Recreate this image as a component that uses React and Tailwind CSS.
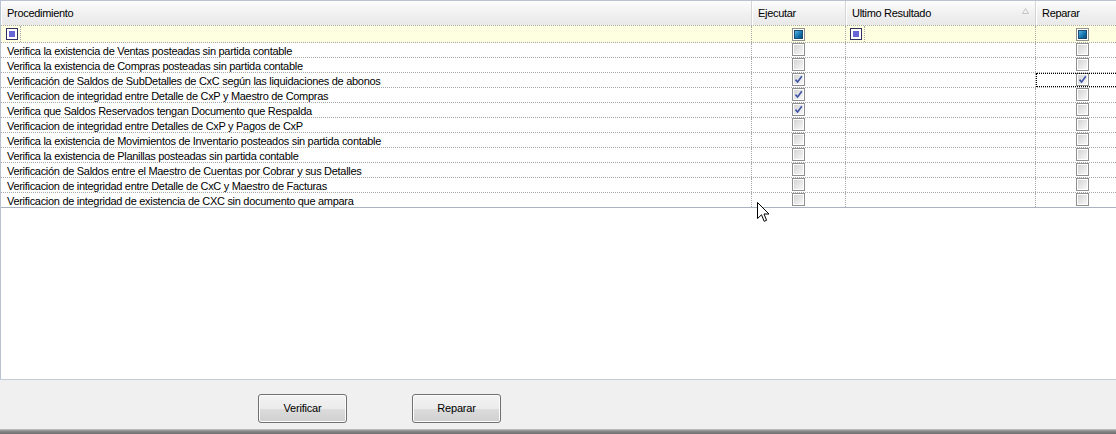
import React from 'react'

const rows = [
  { name: 'Verifica la existencia de Ventas posteadas sin partida contable', run: false, fix: false },
  { name: 'Verifica la existencia de Compras posteadas sin partida contable', run: false, fix: false },
  { name: 'Verificación de Saldos de SubDetalles de CxC según las liquidaciones de abonos', run: true, fix: true, focus: true },
  { name: 'Verificacion de integridad entre Detalle de CxP y Maestro de Compras', run: true, fix: false },
  { name: 'Verifica que Saldos Reservados tengan Documento que Respalda', run: true, fix: false },
  { name: 'Verificacion de integridad entre Detalles de CxP y Pagos de CxP', run: false, fix: false },
  { name: 'Verifica la existencia de Movimientos de Inventario posteados sin partida contable', run: false, fix: false },
  { name: 'Verifica la existencia de Planillas posteadas sin partida contable', run: false, fix: false },
  { name: 'Verificación de Saldos entre el Maestro de Cuentas por Cobrar y sus Detalles', run: false, fix: false },
  { name: 'Verificacion de integridad entre Detalle de CxC y Maestro de Facturas', run: false, fix: false },
  { name: 'Verificacion de integridad de existencia de CXC sin documento que ampara', run: false, fix: false },
]

const cols = 'grid grid-cols-[751px_94px_190px_92px]'

function CheckBox({ checked }) {
  return (
    <div className="h-[13px] w-[13px] border border-[#8e8f8f] bg-white p-px">
      <div className="relative h-full w-full bg-[linear-gradient(135deg,#d4d4d4,#f7f7f7)]">
        {checked && (
          <svg viewBox="0 0 9 9" className="absolute inset-0 h-full w-full">
            <path d="M1.5 4.6 L3.6 7 L7.8 1.2" fill="none" stroke="#3d55a6" strokeWidth="1.6" />
          </svg>
        )}
      </div>
    </div>
  )
}

function BlueBox() {
  return (
    <div className="h-[13px] w-[13px] border border-[#8e8f8f] bg-white p-px">
      <div className="h-full w-full border border-[#1b4c70] bg-[linear-gradient(135deg,#55b3e3,#1371ac_60%,#0c4f7d)]" />
    </div>
  )
}

function NavyBox() {
  return (
    <div className="flex h-[12px] w-[12px] items-center justify-center border border-[#2f2f62] bg-white">
      <div className="h-[6px] w-[6px] bg-[#6666d6]" />
    </div>
  )
}

function HeaderCell({ children, sort }) {
  return (
    <div className="relative flex h-[24px] items-center border-r border-[#d5d5d5] bg-[linear-gradient(#fdfdfd,#f1f1f1_50%,#e9e9e9)] pl-[6px] shadow-[inset_1px_0_0_#ffffff]">
      {children}
      {sort && (
        <svg viewBox="0 0 7 6" className="absolute right-[6px] top-[7px] h-[6px] w-[7px]">
          <path d="M0.5 5.5 L3.5 0.5 L6.5 5.5 Z" fill="#f4f4f4" stroke="#c4c4c4" strokeWidth="1" />
        </svg>
      )}
    </div>
  )
}

function ActionButton({ label }) {
  return (
    <button className="h-[29px] w-[89px] rounded-[3px] border border-[#707070] bg-[linear-gradient(#f3f3f3,#ebebeb_50%,#dddddd_50%,#cfcfcf)] text-[11px] tracking-[-0.2px] text-black shadow-[inset_0_0_0_1px_#fcfcfc]">
      {label}
    </button>
  )
}

export default function App() {
  return (
    <div className="relative flex h-[434px] w-[1116px] flex-col overflow-hidden bg-white font-['Liberation_Sans',Arial,sans-serif] text-[11px] tracking-[-0.3px] text-black">
      <div className="flex flex-1 flex-col border-l border-t border-[#b9c3cf]">
        <div className={cols}>
          <HeaderCell>Procedimiento</HeaderCell>
          <HeaderCell>Ejecutar</HeaderCell>
          <HeaderCell sort>Ultimo Resultado</HeaderCell>
          <HeaderCell>Reparar</HeaderCell>
        </div>

        <div className={`${cols} h-[18px] border-y border-dotted border-y-[#a8a8a8] bg-[#fefee1]`}>
          <div className="flex items-center border-r border-dotted border-[#a8a8a8] pl-[5px]">
            <div className="flex h-full items-center border-r border-dotted border-[#a8a8a8] pr-[2px]">
              <NavyBox />
            </div>
          </div>
          <div className="flex items-center justify-center border-r border-dotted border-[#a8a8a8]">
            <BlueBox />
          </div>
          <div className="flex items-center border-r border-dotted border-[#a8a8a8] pl-[4px]">
            <div className="flex h-full items-center border-r border-dotted border-[#a8a8a8] pr-[2px]">
              <NavyBox />
            </div>
          </div>
          <div className="flex items-center justify-center">
            <BlueBox />
          </div>
        </div>

        {rows.map((row, i) => (
          <div
            key={i}
            className={`${cols} h-[15px] ${i === rows.length - 1 ? 'border-b border-solid border-[#a9b3bf]' : 'border-b border-dotted border-[#a8a8a8]'}`}
          >
            <div className="overflow-hidden whitespace-nowrap border-r border-dotted border-[#a8a8a8] pl-[6px] pt-px leading-[14px]">
              {row.name}
            </div>
            <div className="flex items-start justify-center border-r border-dotted border-[#a8a8a8]">
              <CheckBox checked={row.run} />
            </div>
            <div className="border-r border-dotted border-[#a8a8a8]" />
            <div className={`flex items-start justify-center ${row.focus ? 'outline-1 -outline-offset-1 outline-dotted outline-black' : ''}`}>
              <CheckBox checked={row.fix} />
            </div>
          </div>
        ))}

        <div className="flex-1" />
      </div>

      <div className="flex h-[50px] items-start gap-[65px] border-t border-[#c5ccd6] bg-[#f0f0f0] pl-[258px] pt-[14px]">
        <ActionButton label="Verificar" />
        <ActionButton label="Reparar" />
      </div>
      <div className="h-[5px] bg-[linear-gradient(#c8c8c8,#8a8a8a_40%,#6f6f6f)]" />

      <svg viewBox="0 0 13 21" className="absolute left-[757px] top-[202px] h-[21px] w-[13px]">
        <path d="M0.5 0.5 L0.5 16.5 L4.5 12.8 L7.2 19.3 L9.6 18.3 L7 12 L12 12 Z" fill="#ffffff" stroke="#000000" strokeWidth="1" strokeLinejoin="miter" />
      </svg>
    </div>
  )
}
